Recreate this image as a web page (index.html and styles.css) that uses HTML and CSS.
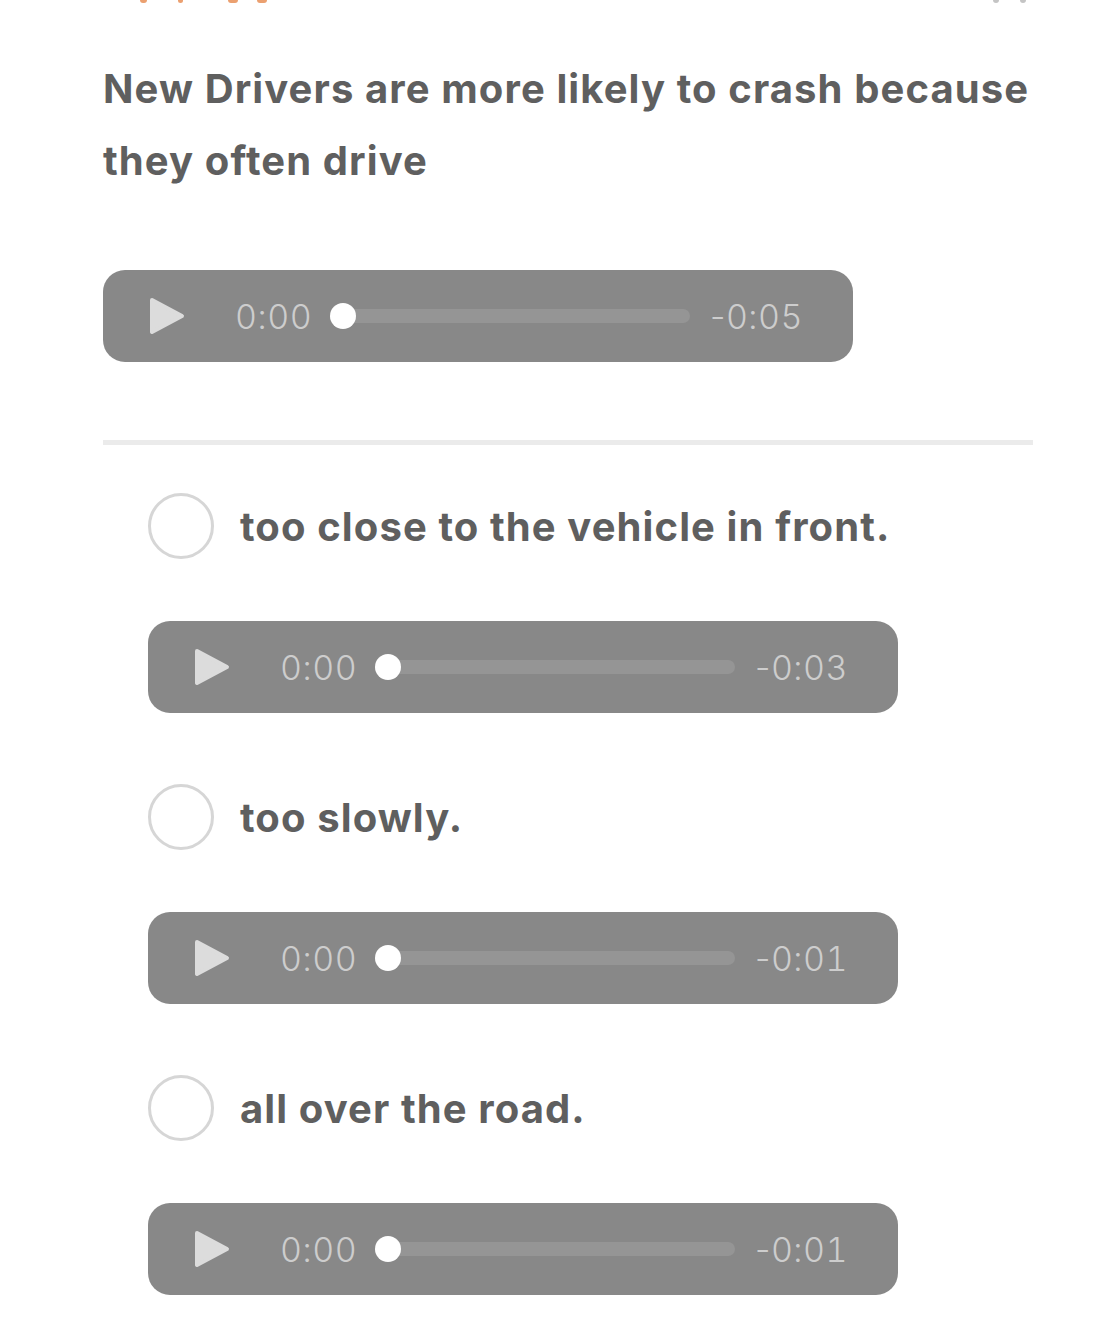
FILE: index.html
```html
<!DOCTYPE html>
<html lang="en">
<head>
    <meta charset="UTF-8">
    <meta name="viewport" content="width=device-width, initial-scale=1.0">
    <title>Question</title>
    <link rel="stylesheet" href="styles.css">
</head>
<body>

<div class="top-strip">
    <div class="progress-dots">
        <span class="dot"></span>
        <span class="dot small"></span>
        <span class="dot wide"></span>
        <span class="dot wide"></span>
    </div>
    <div class="counter-dots">
        <span class="dot gray"></span>
        <span class="dot gray"></span>
    </div>
</div>

<div class="question">
    <h1 class="question-text">New Drivers are more likely to crash because they often drive</h1>

    <div class="player">
        <svg class="play" width="36" height="38" viewBox="0 0 36 38">
            <path d="M3 3 L33 19 L3 35 Z" fill="#dcdcdc" stroke="#dcdcdc" stroke-width="4" stroke-linejoin="round"/>
        </svg>
        <span class="time"><span class="digits">0:00</span></span>
        <div class="track"><span class="knob"></span></div>
        <span class="time">-<span class="digits">0:05</span></span>
    </div>

    <hr class="divider">

    <ul class="answers">
        <li class="answer">
            <label class="option">
                <span class="radio"></span>
                <span class="option-text">too close to the vehicle in front.</span>
            </label>
            <div class="player">
                <svg class="play" width="36" height="38" viewBox="0 0 36 38">
                    <path d="M3 3 L33 19 L3 35 Z" fill="#dcdcdc" stroke="#dcdcdc" stroke-width="4" stroke-linejoin="round"/>
                </svg>
                <span class="time"><span class="digits">0:00</span></span>
                <div class="track"><span class="knob"></span></div>
                <span class="time">-<span class="digits">0:03</span></span>
            </div>
        </li>
        <li class="answer">
            <label class="option">
                <span class="radio"></span>
                <span class="option-text">too slowly.</span>
            </label>
            <div class="player">
                <svg class="play" width="36" height="38" viewBox="0 0 36 38">
                    <path d="M3 3 L33 19 L3 35 Z" fill="#dcdcdc" stroke="#dcdcdc" stroke-width="4" stroke-linejoin="round"/>
                </svg>
                <span class="time"><span class="digits">0:00</span></span>
                <div class="track"><span class="knob"></span></div>
                <span class="time">-<span class="digits">0:01</span></span>
            </div>
        </li>
        <li class="answer">
            <label class="option">
                <span class="radio"></span>
                <span class="option-text">all over the road.</span>
            </label>
            <div class="player">
                <svg class="play" width="36" height="38" viewBox="0 0 36 38">
                    <path d="M3 3 L33 19 L3 35 Z" fill="#dcdcdc" stroke="#dcdcdc" stroke-width="4" stroke-linejoin="round"/>
                </svg>
                <span class="time"><span class="digits">0:00</span></span>
                <div class="track"><span class="knob"></span></div>
                <span class="time">-<span class="digits">0:01</span></span>
            </div>
        </li>
    </ul>
</div>

</body>
</html>
```

FILE: styles.css
```css
body {
    font-family: Inter, "Noto Sans", Arial, sans-serif;
    background-color: #ffffff;
    margin: 0;
    color: #5f5f5f;
}

/* Cut-off header strip */
.top-strip {
    height: 3px;
    display: flex;
    justify-content: space-between;
    padding: 0 76px 0 140px;
}

.progress-dots,
.counter-dots {
    display: flex;
}

.dot {
    width: 7px;
    height: 3px;
    border-radius: 0 0 4px 4px;
    background-color: #eba070;
    margin-right: 31px;
}

.dot.small {
    width: 5px;
    margin-right: 45px;
}

.dot.wide {
    width: 10px;
    margin-right: 19px;
}

.dot.gray {
    background-color: #c4c4c4;
    width: 6px;
    margin: 0 0 0 21px;
}

.question {
    padding: 50px 69px 0 103px;
}

.question-text {
    font-size: 40px;
    font-weight: 700;
    line-height: 72px;
    margin: 0 -40px 73px 0;
    letter-spacing: 1.1px;
}

/* Audio player */
.player {
    width: 750px;
    height: 92px;
    box-sizing: border-box;
    background-color: #888888;
    border-radius: 22px;
    display: flex;
    align-items: center;
    padding: 0 50px 0 46px;
}

.play {
    flex-shrink: 0;
    margin-right: 50px;
}

.time {
    font-size: 34px;
    font-weight: 300;
    color: #cdcdcd;
    letter-spacing: 0.5px;
}

.time .digits {
    font-variant-numeric: tabular-nums;
}

.track {
    flex: 1;
    position: relative;
    height: 14px;
    border-radius: 7px;
    background-color: #959595;
    margin: 0 20px 0 18px;
}

.knob {
    position: absolute;
    left: 0;
    top: -6px;
    width: 26px;
    height: 26px;
    border-radius: 50%;
    background-color: #ffffff;
}

.divider {
    border: none;
    height: 5px;
    background-color: #ebebeb;
    margin: 78px 0 0;
}

/* Answers */
.answers {
    list-style-type: none;
    padding: 0 0 0 45px;
    margin: 48px 0 0;
}

.answer {
    margin-bottom: 71px;
}

.option {
    display: flex;
    align-items: center;
    gap: 26px;
    margin-bottom: 62px;
}

.radio {
    width: 60px;
    height: 60px;
    border: 3px solid #d6d6d6;
    border-radius: 50%;
    flex-shrink: 0;
}

.option-text {
    font-size: 40px;
    font-weight: 700;
    letter-spacing: 1.1px;
}
```
